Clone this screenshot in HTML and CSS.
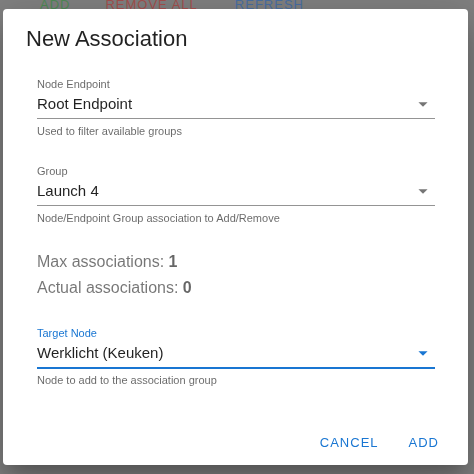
FILE: index.html
```
<!DOCTYPE html>
<html>
<head>
<meta charset="utf-8">
<link rel="stylesheet" href="styles.css">
</head>
<body>
<div class="page">
  <div class="toolbar">
    <span class="tb-btn tb-add">Add</span>
    <span class="tb-btn tb-remove">Remove all</span>
    <span class="tb-btn tb-refresh">Refresh</span>
  </div>
</div>
<div class="overlay">
  <div class="dialog">
    <div class="title">New Association</div>
    <div class="body">
      <div class="field">
        <div class="label">Node Endpoint</div>
        <div class="control">
          <span class="value">Root Endpoint</span>
          <svg class="arrow" viewBox="0 0 24 24" width="22" height="22"><path d="M7 10l5 5 5-5z"/></svg>
        </div>
        <div class="hint">Used to filter available groups</div>
      </div>
      <div class="field field-gap">
        <div class="label">Group</div>
        <div class="control">
          <span class="value">Launch 4</span>
          <svg class="arrow" viewBox="0 0 24 24" width="22" height="22"><path d="M7 10l5 5 5-5z"/></svg>
        </div>
        <div class="hint">Node/Endpoint Group association to Add/Remove</div>
      </div>
      <div class="stats">
        <div class="stat">Max associations: <b>1</b></div>
        <div class="stat">Actual associations: <b>0</b></div>
      </div>
      <div class="field field-gap3 focused">
        <div class="label">Target Node</div>
        <div class="control">
          <span class="value">Werklicht (Keuken)</span>
          <svg class="arrow" viewBox="0 0 24 24" width="22" height="22"><path d="M7 10l5 5 5-5z"/></svg>
        </div>
        <div class="hint">Node to add to the association group</div>
      </div>
    </div>
    <div class="actions">
      <button class="btn">Cancel</button>
      <button class="btn">Add</button>
    </div>
  </div>
</div>
</body>
</html>
```
FILE: styles.css
```
* { box-sizing: content-box; }
html, body { margin: 0; padding: 0; }
body {
  background: #808080;
  font-family: "Liberation Sans", Arial, sans-serif;
  width: 474px;
  height: 474px;
  overflow: hidden;
}
.page { height: 474px; }
.toolbar {
  display: flex;
  margin-top: -3px;
  padding-left: 40px;
  font-size: 13px;
  line-height: 16px;
  letter-spacing: 1px;
  text-transform: uppercase;
}
.tb-add { color: #4f8a55; }
.tb-remove { color: #a4504e; margin-left: 35px; }
.tb-refresh { color: #4a6fa2; margin-left: 37px; }

.overlay { position: fixed; inset: 0; }
.dialog {
  position: absolute;
  left: 3px;
  top: 9px;
  width: 465px;
  height: 456px;
  background: #fff;
  border-radius: 4px;
  box-shadow: 0 11px 15px -7px rgba(0,0,0,.2), 0 24px 38px 3px rgba(0,0,0,.14), 0 9px 46px 8px rgba(0,0,0,.12);
  display: flex;
  flex-direction: column;
}
.title {
  margin: 16px 0 0 23px;
  font-size: 22px;
  line-height: 28px;
  color: rgba(0,0,0,.87);
}
.body {
  margin-top: 24px;
  padding: 0 33px 0 34px;
}
.label {
  font-size: 11px;
  line-height: 14px;
  color: rgba(0,0,0,.6);
}
.control {
  display: flex;
  align-items: center;
  height: 26px;
  padding-bottom: 1px;
  border-bottom: 1px solid rgba(0,0,0,.42);
}
.value {
  flex: 1;
  font-size: 15px;
  line-height: 26px;
  color: rgba(0,0,0,.87);
}
.arrow {
  fill: rgba(0,0,0,.54);
  flex: none;
  margin-right: 1px;
  margin-top: -1px;
}
.hint {
  margin-top: 5px;
  font-size: 11px;
  line-height: 14px;
  color: rgba(0,0,0,.6);
}
.field-gap { margin-top: 26px; }
.field-gap3 { margin-top: 25px; }
.focused .label { color: #1976d2; }
.focused .control { border-bottom: 2px solid #1976d2; }
.focused .arrow { fill: #1976d2; }
.focused .hint { margin-top: 4px; }

.stats { margin-top: 24px; }
.stat {
  font-size: 16px;
  line-height: 26px;
  color: rgba(0,0,0,.54);
}
.stat b { font-weight: 700; color: rgba(0,0,0,.6); }

.actions {
  margin-top: 37px;
  display: flex;
  justify-content: flex-end;
  padding-right: 14px;
}
.btn {
  height: 36px;
  padding: 0 15px;
  border: 0;
  background: transparent;
  font-family: "Liberation Sans", Arial, sans-serif;
  font-size: 13px;
  letter-spacing: 1px;
  text-transform: uppercase;
  color: #1976d2;
}
```
